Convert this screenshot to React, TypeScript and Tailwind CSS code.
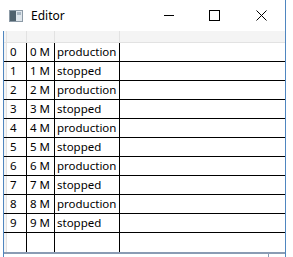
import React from 'react';

const rows = Array.from({ length: 10 }, (_, i) => ({
  id: i,
  size: `${i} M`,
  state: i % 2 === 0 ? 'production' : 'stopped',
}));

function Row({ a, b, c }: { a: string; b: string; c: string }) {
  return (
    <div className="flex h-[19px] border-b border-black text-[11.5px] leading-[17px]">
      <div className="w-[3px] shrink-0 bg-[#f4f4f4] border-r border-[#e2e2e2]" />
      <div className="w-[20px] shrink-0 pl-[3px] border-r border-black">{a}</div>
      <div className="w-[28px] shrink-0 pl-[3px] border-r border-black">{b}</div>
      <div className="w-[65px] shrink-0 pl-[2px] border-r border-black">{c}</div>
      <div className="flex-1" />
    </div>
  );
}

export default function App() {
  return (
    <div className="w-[293px] h-[257px] bg-white overflow-hidden relative" style={{ fontFamily: '"Segoe UI", "Noto Sans", sans-serif' }}>
      {/* title bar */}
      <div className="h-[31px] flex items-center pl-[9px] pr-[8px] w-[285px]">
        <svg width="14" height="12" viewBox="0 0 14 12" className="mr-[8px]">
          <rect x="0.5" y="0.5" width="13" height="11" fill="#dfe6ec" stroke="#8c9aa6" />
          <rect x="1" y="1" width="6" height="10" fill="#50626e" />
          <rect x="8" y="2" width="4" height="3" fill="#a8b6c2" />
        </svg>
        <span className="text-[12px] text-black">Editor</span>
        <div className="flex-1" />
        <svg width="11" height="11" viewBox="0 0 11 11" className="mr-[34px]">
          <line x1="0" y1="5.5" x2="10" y2="5.5" stroke="#000" strokeWidth="1" />
        </svg>
        <svg width="11" height="11" viewBox="0 0 11 11" className="mr-[36px]">
          <rect x="0.5" y="0.5" width="10" height="10" fill="none" stroke="#000" strokeWidth="1" />
        </svg>
        <svg width="11" height="11" viewBox="0 0 11 11" className="mr-[10px]">
          <path d="M0.5 0.5 L10.5 10.5 M10.5 0.5 L0.5 10.5" stroke="#000" strokeWidth="1" />
        </svg>
      </div>
      {/* window frame */}
      <div className="absolute left-[285px] top-0 w-[1px] h-[257px] bg-[#4f86c0]" />
      <div className="ml-[3px] w-[283px] border-l border-[#4f86c0]">
        {/* header row */}
        <div className="flex h-[12px] bg-[#f4f4f4] border-b border-[#e2e2e2]">
          <div className="w-[3px] shrink-0 border-r border-[#e2e2e2]" />
          <div className="w-[20px] shrink-0 border-r border-[#e2e2e2]" />
          <div className="w-[28px] shrink-0 border-r border-[#e2e2e2]" />
          <div className="w-[65px] shrink-0 border-r border-[#e2e2e2]" />
          <div className="flex-1" />
        </div>
        {rows.map((r) => (
          <Row key={r.id} a={String(r.id)} b={r.size} c={r.state} />
        ))}
        <div className="flex h-[19px]">
          <div className="w-[3px] shrink-0 bg-[#f4f4f4] border-r border-[#e2e2e2]" />
          <div className="w-[20px] shrink-0 border-r border-black" />
          <div className="w-[28px] shrink-0 border-r border-black" />
          <div className="w-[65px] shrink-0 border-r border-black" />
          <div className="flex-1" />
        </div>
        <div className="h-[2px] bg-[#8a9cb4]" />
        <div className="flex h-[4px]">
          <div className="flex-1" />
          <div className="w-[18px] border-l border-[#8a9cb4]" />
        </div>
      </div>
    </div>
  );
}
